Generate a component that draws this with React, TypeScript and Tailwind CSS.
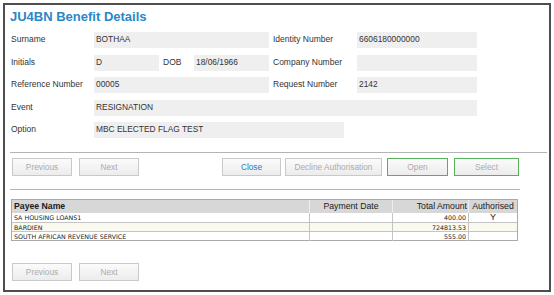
import React from 'react';

const FONT = { fontFamily: '"Liberation Sans", Arial, sans-serif' };
const SMALL = { fontFamily: '"DejaVu Sans", Verdana, sans-serif' };

const Label: React.FC<{ text: string; w: string }> = ({ text, w }) => (
    <div className={`${w} shrink-0 text-[8.5px] leading-[14px] text-[#333]`}>{text}</div>
);

const Field: React.FC<{ value?: string; w: string }> = ({ value, w }) => (
    <div className={`${w} h-[16px] shrink-0 bg-[#efefef] pl-[2px] text-[8.4px] leading-[15px] text-[#333]`}>{value}</div>
);

const Btn: React.FC<{ label: string; w: string; tone?: 'blue' | 'green'; className?: string }> = ({ label, w, tone, className }) => (
    <button
        className={`${w} h-[18px] shrink-0 border bg-gradient-to-b from-[#fbfbfb] to-[#ececec] text-[8.3px] leading-[16px] ${
            tone === 'green' ? 'border-[#58b058]' : 'border-[#c9c9c9]'
        } ${tone === 'blue' ? 'text-[#2b7bbf]' : 'text-[#ababab]'} ${className ?? ''}`}
    >
        {label}
    </button>
);

const rows = [
    { payee: 'SA HOUSING LOANS1', date: '', amount: '400.00', auth: 'Y', bg: 'bg-white' },
    { payee: 'BARDIEN', date: '', amount: '724813.53', auth: '', bg: 'bg-[#f9f9ef]' },
    { payee: 'SOUTH AFRICAN REVENUE SERVICE', date: '', amount: '555.00', auth: '', bg: 'bg-white' },
];

export default function App() {
    return (
        <div className="w-[554px] h-[295px] bg-white" style={FONT}>
            <div className="ml-[3px] mt-[3px] w-[548px] h-[289px] border-2 border-[#4e4e4e] px-[5px] pt-[4px]">
                <h1 className="text-[13px] leading-[16px] font-bold text-[#2b87c8]">JU4BN Benefit Details</h1>

                <div className="mt-[7px] flex flex-col gap-[6.5px] pl-[1px]">
                    <div className="flex">
                        <Label text="Surname" w="w-[83px]" />
                        <Field value="BOTHAA" w="w-[175px]" />
                        <div className="w-[4px]" />
                        <Label text="Identity Number" w="w-[84px]" />
                        <Field value="6606180000000" w="w-[120px]" />
                    </div>
                    <div className="flex">
                        <Label text="Initials" w="w-[83px]" />
                        <Field value="D" w="w-[65px]" />
                        <div className="w-[4px]" />
                        <Label text="DOB" w="w-[31px]" />
                        <Field value="18/06/1966" w="w-[75px]" />
                        <div className="w-[4px]" />
                        <Label text="Company Number" w="w-[84px]" />
                        <Field w="w-[120px]" />
                    </div>
                    <div className="flex">
                        <Label text="Reference Number" w="w-[83px]" />
                        <Field value="00005" w="w-[175px]" />
                        <div className="w-[4px]" />
                        <Label text="Request Number" w="w-[84px]" />
                        <Field value="2142" w="w-[120px]" />
                    </div>
                    <div className="flex">
                        <Label text="Event" w="w-[83px]" />
                        <Field value="RESIGNATION" w="w-[383px]" />
                    </div>
                    <div className="flex">
                        <Label text="Option" w="w-[83px]" />
                        <Field value="MBC ELECTED FLAG TEST" w="w-[250px]" />
                    </div>
                </div>

                <div className="mt-[14px] h-px w-[537px] bg-[#b4b4b4]" />

                <div className="mt-[5px] flex pl-[2px]">
                    <Btn label="Previous" w="w-[60px]" />
                    <Btn label="Next" w="w-[60px]" className="ml-[7px]" />
                    <Btn label="Close" w="w-[59px]" tone="blue" className="ml-[83px]" />
                    <Btn label="Decline Authorisation" w="w-[97px]" className="ml-[4px]" />
                    <Btn label="Open" w="w-[61px]" tone="green" className="ml-[5px]" />
                    <Btn label="Select" w="w-[65px]" tone="green" className="ml-[6px]" />
                </div>

                <div className="mt-[13px] h-px w-[510px] bg-[#b4b4b4]" />

                <div className="ml-[1px] mt-[9px] w-[507px] border border-[#a9a9a9]">
                    <div className="grid grid-cols-[298px_83px_76px_48px] h-[13px] bg-[#d7d7d7] text-[8.7px] leading-[13px] text-[#1a1a1a]">
                        <div className="border-r border-[#eeeeee] pl-[2px] font-bold">Payee Name</div>
                        <div className="border-r border-[#eeeeee] text-center">Payment Date</div>
                        <div className="border-r border-[#eeeeee] pr-[1px] text-right">Total Amount</div>
                        <div className="text-center">Authorised</div>
                    </div>
                    {rows.map((r, i) => (
                        <div
                            key={r.payee}
                            className={`grid grid-cols-[298px_83px_76px_48px] h-[9px] ${r.bg} ${i > 0 ? 'border-t border-[#c4c4c4]' : ''}`}
                        >
                            <div className="border-r border-[#c4c4c4] pl-[2px] text-[6.3px] leading-[9px] text-[#222]" style={SMALL}>
                                {r.payee}
                            </div>
                            <div className="border-r border-[#c4c4c4]" />
                            <div className="border-r border-[#c4c4c4] pr-[2px] text-right text-[6.3px] leading-[9px] text-[#222]" style={SMALL}>
                                {r.amount}
                            </div>
                            <div className="text-center text-[9px] leading-[9px] text-[#222]">{r.auth}</div>
                        </div>
                    ))}
                </div>

                <div className="mt-[22px] flex pl-[2px]">
                    <Btn label="Previous" w="w-[60px]" />
                    <Btn label="Next" w="w-[60px]" className="ml-[7px]" />
                </div>
            </div>
        </div>
    );
}
